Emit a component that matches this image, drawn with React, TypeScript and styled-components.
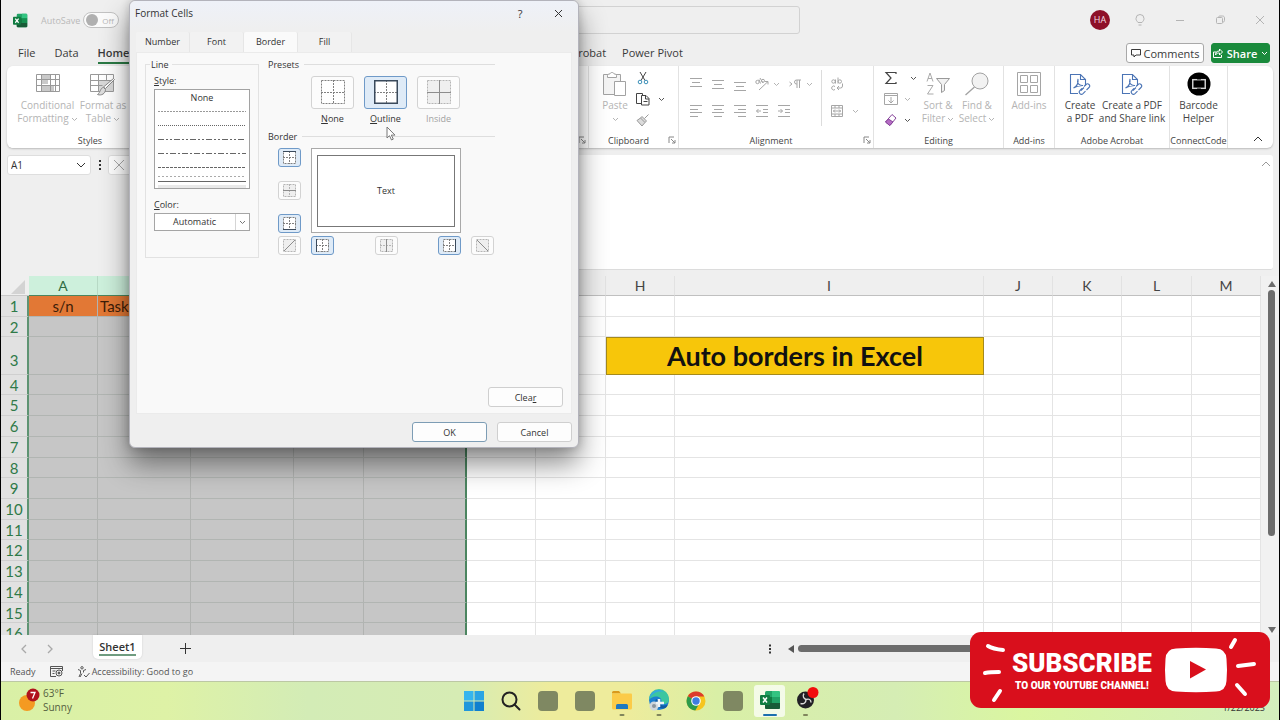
import React from "react";
import styled, { createGlobalStyle } from "styled-components";

const UI = `"Open Sans", "Noto Sans", sans-serif`;
const CELL = `Lato, "Open Sans", sans-serif`;

const GlobalStyle = createGlobalStyle`
  * { box-sizing: border-box; }
  body { margin: 0; background: #efefef; }
  button, input, select, textarea { font-family: inherit; margin: 0; }
  button { padding: 0; border: 0; background: none; color: inherit; cursor: default; }
  svg { display: block; flex: none; }
`;

/* ---------- window ---------- */
const Window = styled.div`
  position: relative;
  display: flex;
  flex-direction: column;
  height: 100vh;
  overflow: hidden;
  background: #efefef;
  border: 0 solid #000;
  border-width: 0 1px;
  font-family: ${UI};
  font-size: 10px;
  color: #333;
`;
const TitleBar = styled.header`
  display: flex;
  align-items: center;
  height: 40px;
  flex: none;
  padding: 0 9px 0 12px;
`;
const TitleLeft = styled.div`
  display: flex;
  align-items: center;
  gap: 3px;
  width: 466px;
  flex: none;
  color: #b9b9b9;
  font-size: 9px;
`;
const AutoSave = styled.span`
  margin-left: 10px;
`;
const Toggle = styled.button`
  display: flex;
  align-items: center;
  gap: 4px;
  width: 36px;
  height: 16px;
  padding-left: 2px;
  border: 1px solid #c2c2c2;
  border-radius: 8px;
  background: #fbfbfb;
  font-size: 8px;
`;
const Knob = styled.span`
  width: 12px;
  height: 12px;
  border-radius: 50%;
  background: #b0b0b0;
`;
const Search = styled.input`
  width: 321px;
  height: 28px;
  border: 1px solid #d2d2d2;
  border-radius: 3px;
  background: #efefef;
`;
const TitleRight = styled.div`
  display: flex;
  align-items: center;
  gap: 20px;
  margin-left: auto;
  color: #b4b4b4;
`;
const Avatar = styled.span`
  width: 20px;
  height: 20px;
  border-radius: 50%;
  background: #8e1028;
  color: #f3dfe2;
  font-size: 9px;
  line-height: 20px;
  text-align: center;
`;
const WindowButton = styled.button`
  display: grid;
  place-items: center;
  width: 20px;
  height: 20px;
`;

/* ---------- tabs ---------- */
const TabRow = styled.nav`
  display: flex;
  align-items: center;
  height: 26px;
  flex: none;
  padding: 0 9px 0 17px;
  font-size: 11px;
`;
const TabSet = styled.div<{ $wide?: boolean }>`
  display: flex;
  gap: ${(p) => (p.$wide ? "19px" : "16px")};
  width: ${(p) => (p.$wide ? "548px" : "auto")};
  flex: none;
`;
const Tab = styled.a<{ $active?: boolean }>`
  height: 22px;
  line-height: 22px;
  text-decoration: none;
  color: #3a3a3a;
  font-weight: ${(p) => (p.$active ? 600 : 400)};
  border-bottom: 2px solid ${(p) => (p.$active ? "#2b7a45" : "transparent")};
`;
const TabActions = styled.div`
  display: flex;
  gap: 7px;
  margin-left: auto;
`;
const ActionButton = styled.button<{ $green?: boolean }>`
  display: flex;
  align-items: center;
  justify-content: center;
  gap: ${(p) => (p.$green ? "4px" : "3px")};
  width: ${(p) => (p.$green ? "59px" : "78px")};
  height: 20px;
  border: 1px solid ${(p) => (p.$green ? "#1a8a3c" : "#a8a8a8")};
  border-radius: 3px;
  background: ${(p) => (p.$green ? "#1a8a3c" : "#fdfdfd")};
  color: ${(p) => (p.$green ? "#fff" : "#3a3a3a")};
  font-size: 11px;
  font-weight: ${(p) => (p.$green ? 600 : 400)};
`;

/* ---------- ribbon ---------- */
const Ribbon = styled.section`
  display: flex;
  height: 82px;
  flex: none;
  margin: 0 6px;
  border-radius: 6px;
  background: #fff;
  box-shadow: 0 1px 2px rgba(0, 0, 0, 0.22);
`;
const Group = styled.div<{ $w: number }>`
  display: flex;
  flex-direction: column;
  flex: none;
  width: ${(p) => p.$w}px;
  border-right: 1px solid #e2e2e2;
`;
const GroupBody = styled.div<{ $pad?: number }>`
  display: flex;
  flex: 1;
  padding: 0 ${(p) => p.$pad ?? 0}px;
`;
const GroupFoot = styled.div`
  display: flex;
  align-items: center;
  height: 16px;
  font-size: 9px;
  color: #444;
  white-space: nowrap;
`;
const GroupName = styled.span`
  flex: 1;
  text-align: center;
`;
const Launcher = styled.button`
  width: 10px;
  color: #888;
`;
const BigButton = styled.button<{ $w: number; $dim?: boolean }>`
  display: flex;
  flex-direction: column;
  align-items: center;
  width: ${(p) => p.$w}px;
  flex: none;
  padding-top: 6px;
  gap: 3px;
  font-size: 10px;
  line-height: 13px;
  white-space: nowrap;
  color: ${(p) => (p.$dim ? "#b4b4b4" : "#444")};
`;
const BigLabel = styled.span`
  display: flex;
  flex-direction: column;
  align-items: center;
`;
const LabelLine = styled.span`
  display: flex;
  align-items: center;
  gap: 2px;
  min-height: 13px;
`;
const ToolStack = styled.div<{ $gap?: number; $top?: number }>`
  display: flex;
  flex-direction: column;
  gap: ${(p) => p.$gap ?? 0}px;
  padding-top: ${(p) => p.$top ?? 1}px;
`;
const ToolLine = styled.div`
  display: flex;
  align-items: center;
  height: 21px;
`;
const Tool = styled.button<{ $dim?: boolean }>`
  display: grid;
  place-items: center;
  width: 22px;
  height: 20px;
  color: ${(p) => (p.$dim ? "#a6a6a6" : "#444")};
`;
const Arrow = styled.span<{ $dim?: boolean; $gap?: number }>`
  margin-left: ${(p) => p.$gap ?? 0}px;
  color: ${(p) => (p.$dim ? "#b4b4b4" : "#555")};
`;
const ToolDivider = styled.span`
  width: 1px;
  height: 56px;
  margin: 4px 4px 0 8px;
  background: #dcdcdc;
`;
const RibbonEnd = styled.div`
  display: flex;
  flex: 1;
  justify-content: flex-end;
  align-items: flex-end;
  padding: 0 10px 5px 0;
`;

/* ---------- formula bar ---------- */
const FormulaBar = styled.section`
  display: flex;
  align-items: flex-start;
  height: 115px;
  flex: none;
  margin: 7px 6px 6px;
`;
const NameBox = styled.div`
  display: flex;
  align-items: center;
  width: 84px;
  height: 20px;
  padding: 0 4px 0 3px;
  border: 1px solid #dedede;
  border-radius: 3px;
  background: #fff;
`;
const NameInput = styled.input`
  flex: 1;
  min-width: 0;
  border: 0;
  padding: 0;
  background: none;
  font-size: 10px;
  color: #333;
`;
const BarDots = styled.span`
  width: 17px;
  display: grid;
  place-items: center;
  height: 20px;
`;
const BarTools = styled.div`
  display: flex;
  align-items: center;
  width: 90px;
  height: 20px;
  padding-left: 4px;
  border: 1px solid #dedede;
  border-radius: 3px;
  background: #fff;
  color: #a9a9a9;
`;
const Formula = styled.div`
  display: flex;
  flex: 1;
  height: 115px;
  margin-left: 6px;
  border-radius: 3px;
  border-bottom: 1px solid #dcdcdc;
  background: #fff;
  color: #999;
`;
const FormulaText = styled.textarea`
  flex: 1;
  border: 0;
  resize: none;
  background: none;
`;
const Collapse = styled.button`
  width: 12px;
  height: 18px;
`;

/* ---------- grid ---------- */
const GridArea = styled.main`
  display: flex;
  flex: 1;
  min-height: 0;
  overflow: hidden;
`;
const Sheet = styled.div`
  flex: 1;
  min-width: 0;
  overflow: hidden;
  background: #fff;
`;
const Table = styled.table`
  table-layout: fixed;
  width: 1259px;
  border-collapse: separate;
  border-spacing: 0;
  font-family: ${CELL};
  font-size: 15px;
`;
const Row = styled.tr<{ $h: number }>`
  height: ${(p) => p.$h}px;
  vertical-align: baseline;
`;
const ColHead = styled.th<{ $sel?: boolean }>`
  padding: 1px 0 0;
  font-size: 14px;
  font-weight: 400;
  line-height: 18px;
  color: ${(p) => (p.$sel ? "#2f6b42" : "#444")};
  background: ${(p) => (p.$sel ? "#cdf0dc" : "#efefef")};
  border-right: 1px solid ${(p) => (p.$sel ? "#b7d9c5" : "#e2e2e2")};
  border-bottom: 1px solid ${(p) => (p.$sel ? "#4b8560" : "#c0c0c0")};
`;
const Corner = styled.th`
  padding: 2px 2px 0 10px;
  vertical-align: middle;
  background: #efefef;
  border-bottom: 1px solid #c9c9c9;
`;
const RowHead = styled.th`
  padding: 1px 0 0;
  vertical-align: baseline;
  font-weight: 400;
  line-height: 18px;
  color: #2f7a48;
  background: #e1e1e1;
  border-right: 2px solid #5f9473;
  border-bottom: 1px solid #cfcfcf;
`;
const Cell = styled.td<{ $sel?: boolean; $edge?: boolean; $fill?: "orange" | "yellow" }>`
  padding: 1px 2px 0;
  vertical-align: baseline;
  line-height: 18px;
  overflow: hidden;
  white-space: nowrap;
  text-align: left;
  color: #3d1d08;
  background: ${(p) => (p.$fill ? "#e27835" : p.$sel ? "#c6c6c6" : "#fff")};
  border-right: ${(p) => (p.$edge ? "2px solid #4b8560" : p.$sel ? "1px solid #b1b3b1" : "1px solid #e4e4e4")};
  border-bottom: 1px solid ${(p) => (p.$sel ? "#b1b5b2" : "#e4e4e4")};
`;
const CenterCell = styled(Cell)`
  text-align: center;
`;
const TitleCell = styled.td`
  padding: 0;
  vertical-align: baseline;
  text-align: center;
  font-size: 27px;
  font-weight: 700;
  line-height: 36px;
  color: #111;
  background: #f7c60a;
  border: 1px solid #a58a1c;
`;
const VScroll = styled.div`
  display: flex;
  flex-direction: column;
  align-items: center;
  justify-content: space-between;
  width: 18px;
  flex: none;
  padding: 5px 0 2px 3px;
  background: #f1f1f1;
`;
const VScrollTop = styled.div`
  display: flex;
  flex-direction: column;
  align-items: center;
  gap: 3px;
`;
const VThumb = styled.div`
  width: 7px;
  height: 246px;
  border-radius: 4px;
  background: #6c6c6c;
`;

/* ---------- sheet tabs and status ---------- */
const SheetBar = styled.div`
  display: flex;
  align-items: center;
  height: 27px;
  flex: none;
  padding-left: 17px;
  background: #efefef;
`;
const SheetNav = styled.button`
  display: grid;
  place-items: center;
  width: 12px;
  height: 20px;
  margin-right: 14px;
  color: #a9a9a9;
`;
const SheetTab = styled.button`
  align-self: flex-start;
  width: 49px;
  height: 24px;
  margin-left: 23px;
  border-radius: 0 0 5px 5px;
  background: #fff;
  font-size: 11px;
  font-weight: 600;
  line-height: 18px;
  box-shadow: 0 0 2px rgba(0, 0, 0, 0.16);
`;
const SheetName = styled.span`
  border-bottom: 2px solid #6f9c80;
`;
const AddSheet = styled.button`
  margin-left: 38px;
`;
const HScroll = styled.div`
  display: flex;
  align-items: center;
  gap: 4px;
  margin-left: auto;
  width: 511px;
`;
const HDots = styled.span`
  margin-right: 12px;
`;
const HThumb = styled.div`
  width: 300px;
  height: 7px;
  border-radius: 4px;
  background: #6c6c6c;
`;
const StatusBar = styled.footer`
  display: flex;
  align-items: center;
  height: 19px;
  flex: none;
  padding-left: 9px;
  background: #f4f4f4;
  font-size: 9px;
  color: #555;
`;
const StatusItem = styled.span<{ $gap: number }>`
  display: flex;
  align-items: center;
  gap: 2px;
  margin-right: ${(p) => p.$gap}px;
`;

/* ---------- taskbar ---------- */
const Taskbar = styled.div`
  display: grid;
  grid-template-columns: 1fr auto 1fr;
  align-items: center;
  height: 39px;
  flex: none;
  border-top: 1px solid #bcc8a4;
  background: linear-gradient(90deg, #d9f0a6 0%, #def2a6 13%, #d3ecb6 24%, #d6ecb4 36%, #eeec9c 43%, #eeec9c 49%, #d9efa6 56%, #d5edb4 70%, #daf6a0 80%, #d3efbd 100%);
`;
const Weather = styled.div`
  display: flex;
  align-items: center;
  gap: 3px;
  padding: 0 0 2px 17px;
  font-size: 10px;
  line-height: 14px;
  color: #55603f;
`;
const Temp = styled.div`
  display: flex;
  flex-direction: column;
`;
const Dock = styled.div`
  display: flex;
`;
const DockItem = styled.button<{ $open?: boolean }>`
  display: grid;
  place-items: center;
  width: 31px;
  height: 32px;
  margin: 0 3px;
  border-radius: 3px;
  background: ${(p) => (p.$open ? "rgba(255,255,255,.72)" : "transparent")};
`;
const Clock = styled.time`
  justify-self: end;
  align-self: end;
  padding-right: 14px;
  font-size: 9px;
  line-height: 24px;
  color: #333;
`;

/* ---------- dialog ---------- */
const Dialog = styled.section`
  position: absolute;
  top: 0;
  left: 128px;
  display: flex;
  flex-direction: column;
  width: 450px;
  height: 448px;
  padding: 0 6px 5px;
  border: 1px solid #b3b3bb;
  border-radius: 6px;
  background: #efefef;
  box-shadow: 0 16px 28px rgba(0, 0, 0, 0.45), 0 0 10px rgba(0, 0, 0, 0.2);
  font-size: 9px;
`;
const DialogTitle = styled.header`
  display: flex;
  align-items: center;
  height: 31px;
  padding: 0 1px 6px 5px;
  margin: 0 -6px;
  border-radius: 6px 6px 0 0;
  background: linear-gradient(#eef1f8, #efefef);
`;
const DialogHeading = styled.h1`
  flex: 1;
  margin: 0;
  font-size: 10px;
  font-weight: 400;
`;
const DialogButton = styled.button`
  display: grid;
  place-items: center;
  width: 38px;
  height: 24px;
  font-size: 11px;
`;
const DialogTabs = styled.div`
  display: flex;
  height: 20px;
`;
const DialogTab = styled.button<{ $active?: boolean }>`
  width: 54px;
  border-radius: 2px 2px 0 0;
  background: ${(p) => (p.$active ? "#fafafa" : "#f2f2f2")};
  border-right: 1px solid #e6e6e6;
  font-size: 9px;
`;
const Panel = styled.div`
  display: flex;
  flex-direction: column;
  height: 363px;
  padding: 5px 8px 6px;
  border: 1px solid #ebebeb;
  background: #f9f9f9;
`;
const PanelBody = styled.div`
  display: flex;
  gap: 9px;
  flex: 1;
`;
const LineSet = styled.fieldset`
  width: 114px;
  height: 200px;
  margin: 0;
  padding: 3px 8px;
  border: 1px solid #e2e2e2;
  line-height: 13px;
`;
const Legend = styled.legend`
  padding: 0 3px 0 1px;
  margin-left: -4px;
  line-height: 13px;
`;
const FieldLabel = styled.label`
  display: block;
  height: 15px;
  line-height: 14px;
`;
const StyleList = styled.div`
  height: 100px;
  margin-bottom: 9px;
  padding: 0 3px;
  border: 1px solid #a2a2a2;
  background: #fff;
`;
const StyleNone = styled.div`
  height: 16px;
  line-height: 15px;
  text-align: center;
`;
const SelectWrap = styled.div`
  position: relative;
`;
const ColorSelect = styled.select`
  width: 100%;
  height: 18px;
  padding: 0 15px 0 0;
  border: 1px solid #a5a5a5;
  border-radius: 0;
  background: #fff;
  appearance: none;
  font-size: 9px;
  color: #333;
  text-align-last: center;
`;
const SelectArrow = styled.span`
  position: absolute;
  top: 1px;
  right: 1px;
  display: grid;
  place-items: center;
  width: 14px;
  height: 16px;
  border-left: 1px solid #d5d5d5;
  color: #777;
  pointer-events: none;
`;
const RightSide = styled.div`
  width: 227px;
`;
const SectionHead = styled.h2`
  display: flex;
  align-items: center;
  gap: 5px;
  margin: 0;
  height: 13px;
  font-size: 9px;
  font-weight: 400;

  &::after {
    content: "";
    flex: 1;
    height: 1px;
    background: #dedede;
  }
`;
const Presets = styled.div`
  display: flex;
  gap: 10px;
  padding: 5px 0 0 43px;
  height: 59px;
`;
const Preset = styled.div<{ $dim?: boolean }>`
  display: flex;
  flex-direction: column;
  align-items: center;
  gap: 3px;
  color: ${(p) => (p.$dim ? "#a2a2a2" : "#333")};
  line-height: 13px;
`;
const ToggleButton = styled.button<{ $on?: boolean; $big?: boolean }>`
  display: grid;
  place-items: center;
  width: ${(p) => (p.$big ? 43 : 23)}px;
  height: ${(p) => (p.$big ? 33 : 19)}px;
  border: 1px solid ${(p) => (p.$on ? "#6f9ac8" : "#d3d3d3")};
  border-radius: 3px;
  background: ${(p) => (p.$on ? "#dfebf7" : "#fcfcfc")};
`;
const BorderGrid = styled.div`
  display: grid;
  grid-template-columns: 23px 150px 23px;
  gap: 3px 10px;
  padding: 5px 0 0 10px;
`;
const SideButtons = styled.div`
  display: flex;
  flex-direction: column;
  justify-content: space-between;
  height: 85px;
`;
const Preview = styled.div`
  padding: 6px 5px 5px;
  border: 1px solid #a9a9a9;
  background: #fff;
`;
const PreviewCell = styled.div`
  display: grid;
  place-items: center;
  height: 72px;
  border: 1px solid #777;
`;
const BottomButtons = styled.div`
  display: flex;
  justify-content: space-between;
`;
const Actions = styled.div<{ $foot?: boolean }>`
  display: flex;
  justify-content: flex-end;
  gap: 10px;
  padding-top: ${(p) => (p.$foot ? "8px" : "0")};
`;
const PushButton = styled.button<{ $primary?: boolean }>`
  width: 75px;
  height: 20px;
  flex: none;
  border: 1px solid ${(p) => (p.$primary ? "#7d9db5" : "#cfcfcf")};
  border-radius: 3px;
  background: #fdfdfd;
  font-size: 9px;
`;
const Pointer = styled.svg`
  position: absolute;
  top: 126px;
  left: 385px;
`;

/* ---------- overlay banner ---------- */
const Banner = styled.a`
  position: absolute;
  right: 9px;
  bottom: 12px;
  display: flex;
  align-items: center;
  gap: 6px;
  width: 300px;
  height: 76px;
  padding: 0 12px;
  border-radius: 11px;
  background: #d90f1c;
  color: #fff;
  text-decoration: none;
  font-family: Roboto, sans-serif;
  font-weight: 900;
  white-space: nowrap;
`;
const BannerText = styled.span`
  display: flex;
  flex-direction: column;
  align-items: center;
`;
const BannerBig = styled.span`
  font-size: 26px;
  line-height: 32px;
`;
const BannerSmall = styled.span`
  font-size: 10px;
  line-height: 14px;
`;
const BannerPlay = styled.svg`
  margin-left: auto;
`;

/* ---------- icons ---------- */
type IconProps = { w: number; h: number; children: React.ReactNode };
const Icon = ({ w, h, children }: IconProps) => (
  <svg width={w} height={h} viewBox={`0 0 ${w} ${h}`} fill="none" stroke="currentColor" strokeWidth="1">
    {children}
  </svg>
);
const Chevron = ({ up, wide }: { up?: boolean; wide?: boolean }) => (
  <Icon w={wide ? 10 : 7} h={8}>
    <path d={wide ? (up ? "M1 6l4-4 4 4" : "M1 2l4 4 4-4") : "M1 3l2.500 2.500L6 3"} />
  </Icon>
);
const ExcelLogo = ({ size }: { size: number }) => (
  <svg width={size} height={size} viewBox="0 0 20 20">
    <rect x="5" y="1" width="14" height="18" rx="1.500" fill="#21a366" />
    <path d="M12 1h5.500A1.500 1.500 0 0 1 19 2.500V7h-7z" fill="#33c481" />
    <path d="M5 7h7v6H5z" fill="#107c41" />
    <path d="M5 13h14v4.500a1.500 1.500 0 0 1-1.500 1.500h-11A1.500 1.500 0 0 1 5 17.500z" fill="#185c37" />
    <path d="M12 7h7v6h-7z" fill="#159050" />
    <rect x="0" y="5" width="10.500" height="10.500" rx="1" fill="#107c41" />
    <path d="M3 7.500l4.500 5.500M7.500 7.500L3 13" stroke="#fff" strokeWidth="1.600" />
  </svg>
);
const LaunchIcon = () => (
  <Icon w={8} h={8}>
    <path d="M1 7V1h5M3 3l4 4M7 4v3H4" />
  </Icon>
);
const CondIcon = () => (
  <Icon w={24} h={24}>
    <rect x="5" y="3" width="10" height="4" fill="#c9c9c9" stroke="none" />
    <rect x="5" y="8" width="7" height="4" fill="#c9c9c9" stroke="none" />
    <rect x="5" y="14" width="13" height="5" fill="#c9c9c9" stroke="none" />
    <path d="M.5 2.500h23v17H.5zM.5 7.500h23M.5 13.500h23M5.500 2.500v17M14.500 2.500v17M19.500 2.500v17" stroke="#999" />
  </Icon>
);
const FormatTableIcon = () => (
  <Icon w={26} h={24}>
    <rect x="8" y="8" width="15" height="11" fill="#d8d8d8" stroke="none" />
    <path d="M.5 2.500h23v17H.5zM.5 8.500h23M.5 13.500h12M8.500 2.500v17M16.500 2.500v6" stroke="#999" />
    <path d="M24.500 7.500l-9 9-2-1.500 10-8.500z" fill="#fff" stroke="#888" />
    <path d="M13.500 15.500c-3 0-3 5-6 7 4 1.500 8-1 8-5z" fill="#ddd" stroke="#888" />
  </Icon>
);
const PasteIcon = () => (
  <Icon w={24} h={24}>
    <path d="M.5 2.500h17v20H.5z" fill="#f4f4f4" stroke="#a2a2a2" />
    <path d="M4.500 3.500c0-1.500 2-1.500 2.500-1.500 0-2 4-2 4 0 .5 0 2.500 0 2.500 1.500v2h-9z" fill="#fff" stroke="#a2a2a2" />
    <path d="M11.500 9.500h11v14h-11z" fill="#fff" stroke="#a2a2a2" />
  </Icon>
);
const CutIcon = () => (
  <Icon w={12} h={14}>
    <path d="M3 1l5 8.500M9 1L4 9.500" stroke="#444" />
    <circle cx="3" cy="11" r="1.800" stroke="#3a8fb8" />
    <circle cx="9" cy="11" r="1.800" stroke="#3a8fb8" />
  </Icon>
);
const CopyIcon = () => (
  <Icon w={14} h={14}>
    <path d="M5 11.500H.5V1.500h6v2" />
    <path d="M5.500 3.500h4.500l3 3v6.500H5.500zM9.500 3.500V7H13M7.500 9.500h4" fill="#fff" />
  </Icon>
);
const PainterIcon = () => (
  <Icon w={14} h={14}>
    <path d="M12.500 1.500l-4 4M6 3.500L10.500 8 9 9.500 4.500 5zM4.500 5L1 7.500l5 5.500L9 9.500" fill="#dcdcdc" stroke="#999" />
  </Icon>
);
const Lines = ({ kind }: { kind: string }) => {
  const d: Record<string, string> = {
    top: "M1 1.500h12M3 5.500h8M1 9.500h12",
    middle: "M1 3.500h12M3 7.500h8M1 11.500h12",
    bottom: "M1 5.500h12M3 9.500h8M1 13.500h12",
    left: "M1 1.500h12M1 5.500h8M1 8.500h12M1 12.500h8",
    center: "M1 1.500h12M3 5.500h8M1 8.500h12M3 12.500h8",
    right: "M1 1.500h12M5 5.500h8M1 8.500h12M5 12.500h8",
    outdent: "M1 1.500h12M8 5.500h5M8 8.500h5M1 12.500h12M6 7H1.500M3.500 5l-2 2 2 2",
    indent: "M1 1.500h12M8 5.500h5M8 8.500h5M1 12.500h12M1 7h4.500M3.500 5l2 2-2 2",
  };
  return (
    <Icon w={14} h={14}>
      <path d={d[kind]} />
    </Icon>
  );
};
const OrientIcon = () => (
  <Icon w={16} h={14}>
    <circle cx="3.500" cy="5" r="1.700" />
    <path d="M5 2.500l1.500 4M6 1l3 5" />
    <circle cx="9" cy="3.800" r="1.500" />
    <path d="M5 13l9-8.500M11 4.500h3v3" />
  </Icon>
);
const PilcrowIcon = () => (
  <Icon w={14} h={12}>
    <path d="M1.500 4l2.500 2-2.500 2" />
    <path d="M9 10V2M11.500 10V2M13 2H8.500a2 2 0 0 0 0 4H9" />
  </Icon>
);
const WrapIcon = () => (
  <Icon w={14} h={14}>
    <circle cx="3.500" cy="4.500" r="1.700" />
    <path d="M5.500 2.500v4M8 .5v6M5 9.500a2 2 0 1 0 0 3M12.500 6.500v2.500a2 2 0 0 1-2 2H7.500M9 9l-2 2 2 2" />
    <circle cx="9.800" cy="4.500" r="1.700" />
  </Icon>
);
const MergeIcon = () => (
  <Icon w={14} h={14}>
    <path d="M1.500 1.500h11v11h-11zM1.500 4h11M1.500 10h11M5 1.500V4M9 1.500V4M5 10v2.500M9 10v2.500M3 7h8M5 5.500L3.500 7 5 8.500M9 5.500L10.500 7 9 8.500" />
  </Icon>
);
const SigmaIcon = () => (
  <Icon w={14} h={14}>
    <path d="M12 3V1.500H2L7 7l-5 5.500h10V11" strokeWidth="1.200" />
  </Icon>
);
const FillIcon = () => (
  <Icon w={14} h={12}>
    <path d="M.5.500h13v11H.5zM.5 2.500h13M7 4v5.500M4.500 7.500L7 10l2.500-2.500" />
  </Icon>
);
const EraserIcon = () => (
  <Icon w={14} h={14}>
    <path d="M8 1.500l4 3.500-6 7.500-4.500-3.500z" fill="#fff" stroke="#87449a" />
    <path d="M4.500 6L9 9l-3.300 3.500L1.500 9z" fill="#b56cc4" stroke="#87449a" />
  </Icon>
);
const SortIcon = () => (
  <Icon w={24} h={24}>
    <path d="M1 9.500L4 1l3 8.500M2 6.500h4M1.500 13.500h5.500L1.500 22h6" stroke="#aaa" />
    <path d="M10.500 6.500h13l-5 6v6l-3 2v-8z" fill="#f2f2f2" stroke="#999" />
  </Icon>
);
const FindIcon = () => (
  <Icon w={26} h={24}>
    <circle cx="16" cy="9" r="8" fill="#f2f2f2" stroke="#a2a2a2" />
    <path d="M10.500 15L1.500 23" stroke="#a2a2a2" strokeWidth="1.400" />
  </Icon>
);
const AddinsIcon = () => (
  <Icon w={24} h={24}>
    <path d="M.5.500h23v23H.5zM3.500 3.500h7v7h-7zM13.500 3.500h7v7h-7zM3.500 13.500h7v7h-7zM13.500 13.500h7v7h-7z" stroke="#a5a5a5" />
  </Icon>
);
const PdfIcon = () => (
  <Icon w={22} h={24}>
    <g stroke="#4b74b5" strokeWidth="1.100">
      <path d="M9 21.500H1.500v-19h10l5 5v6M11.500 2.500v5h5" />
      <path d="M4.500 16c4-2 5-5 4.500-9-1.500 4 1 7 5 6.500-3 .3-6 .5-9.500 2.500z" />
      <path d="M12 18.500l3-3M15 14.500l2-2a2.100 2.100 0 0 1 3 3l-2.500 2.500M13 16.500l-2 2a2.100 2.100 0 0 0 3 3.200l2.500-2.500" />
    </g>
  </Icon>
);
const BarcodeIcon = () => (
  <svg width="24" height="24" viewBox="0 0 25 25">
    <circle cx="12.500" cy="12.500" r="12" fill="#000" />
    <rect x="6" y="8" width="13" height="9" fill="none" stroke="#d5d5d5" strokeWidth="1.500" />
    <path d="M10.500 7h4M10.500 18h4" stroke="#000" strokeWidth="1.500" />
  </svg>
);

/* border pictograms: dashed base with solid edges on top */
const edgePath = (kind: string, s: number) => {
  const e = s - 0.5;
  const m = Math.floor(s / 2) + 0.5;
  const paths: Record<string, string> = {
    none: "",
    outline: `M.5 .5H${e}V${e}H.5z`,
    inside: `M${m} 0V${s}M0 ${m}H${s}`,
    top: `M0 .5H${s}`,
    hmid: `M0 ${m}H${s}`,
    bottom: `M0 ${e}H${s}`,
    left: `M.5 0V${s}`,
    vmid: `M${m} 0V${s}`,
    right: `M${e} 0V${s}`,
    up: `M1 ${s - 1}L${s - 1} 1`,
    down: `M1 1L${s - 1} ${s - 1}`,
  };
  return paths[kind];
};
const BorderIcon = ({ kind, size = 13, dim }: { kind: string; size?: number; dim?: boolean }) => (
  <svg width={size} height={size} viewBox={`0 0 ${size} ${size}`} fill={dim ? "#efefef" : "#fff"}>
    <path
      d={edgePath("outline", size) + (kind === "up" || kind === "down" ? "" : edgePath("inside", size))}
      stroke={dim ? "#b5b5b5" : "#808080"}
      strokeDasharray="2 1"
    />
    <path d={edgePath(kind, size)} fill="none" stroke={dim ? "#8d8d8d" : "#3a4a5c"} strokeWidth={kind === "outline" ? 2 : 1} />
  </svg>
);

const LineSamples = () => (
  <svg width="100%" height="82" stroke="#666" strokeWidth="1">
    <line x1="0" x2="100%" y1="5.500" y2="5.500" strokeDasharray="2 1" stroke="#999" />
    <line x1="0" x2="100%" y1="19.500" y2="19.500" strokeDasharray="1 1" />
    <line x1="0" x2="100%" y1="33.500" y2="33.500" strokeDasharray="6 2 2 2 2 2" />
    <line x1="0" x2="100%" y1="47.500" y2="47.500" strokeDasharray="6 2 2 2" />
    <line x1="0" x2="100%" y1="61.500" y2="61.500" strokeDasharray="3 1" />
    <line x1="0" x2="100%" y1="70.500" y2="70.500" strokeDasharray="2 2" stroke="#aaa" />
    <line x1="0" x2="100%" y1="75.500" y2="75.500" />
    <rect x="0" y="79" width="100%" height="3" fill="#e9e9e9" stroke="none" />
  </svg>
);

/* ---------- taskbar icons ---------- */
const StartIcon = () => (
  <svg width="20" height="20" viewBox="0 0 20 20">
    <path d="M0 0h9.500v9.500H0z" fill="#35b5ee" />
    <path d="M10.500 0H20v9.500h-9.500z" fill="#2aa4e4" />
    <path d="M0 10.500h9.500V20H0z" fill="#1f97dc" />
    <path d="M10.500 10.500H20V20h-9.500z" fill="#0f7fcf" />
  </svg>
);
const SearchIcon = () => (
  <svg width="20" height="20" viewBox="0 0 20 20" fill="none" stroke="#222" strokeWidth="2">
    <circle cx="8.500" cy="8.500" r="7" />
    <path d="M13.500 13.500l5 5" strokeLinecap="round" />
  </svg>
);
const BlankIcon = () => (
  <svg width="20" height="20" viewBox="0 0 20 20">
    <rect width="20" height="20" rx="4" fill="#7f8862" />
  </svg>
);
const FolderIcon = () => (
  <svg width="22" height="30" viewBox="0 0 22 30">
    <path d="M1 6.500A1.500 1.500 0 0 1 2.500 5H8l2 2.500H1z" fill="#d99a1d" />
    <path d="M1 7.500h19a1 1 0 0 1 1 1V22a1.500 1.500 0 0 1-1.500 1.500h-17A1.500 1.500 0 0 1 1 22z" fill="#fbcb48" />
    <path d="M5 23v-3.500A1.500 1.500 0 0 1 6.500 18h9a1.500 1.500 0 0 1 1.500 1.500V23z" fill="#1f78c0" />
    <rect x="8.500" y="28" width="5" height="2" rx="1" fill="#80855c" />
  </svg>
);
const EdgeIcon = () => (
  <svg width="22" height="30" viewBox="0 -1 22 30">
    <circle cx="11" cy="13" r="10" fill="#1c7fd0" />
    <path d="M1 12A10 10 0 0 1 21 12c0 3-2 5-5 5-2 0-3-1-2.500-2.500C14 10 8 8 4 10.500 2 11.500 1 13 1 12z" fill="#3cc6a0" />
    <path d="M1.500 10.500C3 3.500 11 1 16 5c-6-1.500-12 1-14.500 7z" fill="#35a9df" />
    <path d="M8 12c-2 4 1 10 8.500 9.500 2-1 3-2.500 3.500-4-5 2.500-9 0-9-4z" fill="#105ba5" />
    <circle cx="6" cy="19" r="4.500" fill="#cfd6dc" />
    <path d="M11 12v8M8 16h8" stroke="#eef4f6" strokeWidth="2.500" />
    <circle cx="6" cy="19" r="2" fill="#8b949c" />
    <rect x="8.500" y="27" width="5" height="2" rx="1" fill="#80855c" />
  </svg>
);
const ChromeIcon = () => (
  <svg width="20" height="20" viewBox="0 0 20 20">
    <circle cx="10" cy="10" r="9.500" fill="#f6c51e" />
    <path d="M10 10L1.800 5.200A9.500 9.500 0 0 1 18.300 5.500H10z" fill="#dc3b2c" />
    <path d="M10 10L1.800 5.200a9.500 9.500 0 0 0 7.500 14.300l4-7z" fill="#2c9b4b" />
    <circle cx="10" cy="10" r="4.800" fill="#fff" />
    <circle cx="10" cy="10" r="3.700" fill="#3e7de0" />
  </svg>
);
const ExcelTask = () => (
  <svg width="22" height="30" viewBox="0 0 22 30">
    <rect x="6" y="5" width="15" height="18" rx="1.500" fill="#21a366" />
    <path d="M13 5h6.500A1.500 1.500 0 0 1 21 6.500V11h-8z" fill="#33c481" />
    <path d="M6 11h7v6H6z" fill="#107c41" />
    <path d="M6 17h15v4.500a1.500 1.500 0 0 1-1.500 1.500h-12A1.500 1.500 0 0 1 6 21.500z" fill="#185c37" />
    <rect x="1" y="9" width="10" height="10" rx="1" fill="#107c41" />
    <path d="M4 11.500l4 5M8 11.500l-4 5" stroke="#fff" strokeWidth="1.500" />
    <rect x="4" y="28" width="14" height="2" rx="1" fill="#1d6fae" />
  </svg>
);
const ObsIcon = () => (
  <svg width="24" height="30" viewBox="0 -1 24 30">
    <circle cx="10.500" cy="13" r="8.500" fill="#222126" />
    <path d="M9 6.500c-2 3 0 5 2 6M11 12.500c3-1 5 0 5 3M11 12.500c0 3-2 5-5.500 4" stroke="#ddd" strokeWidth="1.400" fill="none" />
    <circle cx="18" cy="5.500" r="5.500" fill="#f20d0d" />
    <rect x="8" y="27" width="5" height="2" rx="1" fill="#80855c" />
  </svg>
);
const SunIcon = () => (
  <svg width="22" height="24" viewBox="0 0 22 24">
    <circle cx="9" cy="15" r="8" fill="#f49a22" />
    <circle cx="15" cy="7" r="6.500" fill="#b0121c" />
    <path d="M12.500 4.500h4.500l-2.500 6" stroke="#fff" strokeWidth="1.300" fill="none" />
  </svg>
);

/* ---------- data ---------- */
const columns = [
  { name: "A", w: 69 },
  { name: "B", w: 93 },
  { name: "C", w: 103 },
  { name: "D", w: 70 },
  { name: "E", w: 103 },
  { name: "F", w: 69 },
  { name: "G", w: 70 },
  { name: "H", w: 69 },
  { name: "I", w: 309 },
  { name: "J", w: 69 },
  { name: "K", w: 69 },
  { name: "L", w: 70 },
  { name: "M", w: 69 },
];
const selectedCount = 5;
const rowHeights = [21, 20, 38, 20, 21, 21, 21, 20, 21, 21, 20, 21, 21, 21, 20, 21];

const SheetRow = ({ n, h }: { n: number; h: number }) => (
  <Row $h={h}>
    <RowHead scope="row">{n}</RowHead>
    {columns.map((c, i) => {
      if (n === 3 && c.name === "H") {
        return (
          <TitleCell key={c.name} colSpan={2}>
            Auto borders in Excel
          </TitleCell>
        );
      }
      if (n === 3 && c.name === "I") return null;
      const common = { $sel: i < selectedCount, $edge: i === selectedCount - 1 };
      if (n === 1 && c.name === "A") {
        return (
          <CenterCell key={c.name} {...common} $fill="orange">
            s/n
          </CenterCell>
        );
      }
      return (
        <Cell key={c.name} {...common} $fill={n === 1 && i < selectedCount ? "orange" : undefined}>
          {n === 1 && c.name === "B" ? "Task" : null}
        </Cell>
      );
    })}
  </Row>
);

const FormatCells = () => (
  <Dialog role="dialog" aria-labelledby="dialog-title">
    <DialogTitle>
      <DialogHeading id="dialog-title">Format Cells</DialogHeading>
      <DialogButton>?</DialogButton>
      <DialogButton aria-label="Close">
        <Icon w={9} h={9}>
          <path d="M1 1l7 7M8 1L1 8" />
        </Icon>
      </DialogButton>
    </DialogTitle>
    <DialogTabs role="tablist">
      {["Number", "Font", "Border", "Fill"].map((t) => (
        <DialogTab key={t} role="tab" $active={t === "Border"}>
          {t}
        </DialogTab>
      ))}
    </DialogTabs>
    <Panel>
      <PanelBody>
        <LineSet>
          <Legend>Line</Legend>
          <FieldLabel as="div">
            <u>S</u>tyle:
          </FieldLabel>
          <StyleList role="listbox" aria-label="Style">
            <StyleNone>None</StyleNone>
            <LineSamples />
          </StyleList>
          <FieldLabel htmlFor="line-color">
            <u>C</u>olor:
          </FieldLabel>
          <SelectWrap>
            <ColorSelect id="line-color">
              <option>Automatic</option>
            </ColorSelect>
            <SelectArrow>
              <Chevron />
            </SelectArrow>
          </SelectWrap>
        </LineSet>
        <RightSide>
          <SectionHead>Presets</SectionHead>
          <Presets>
            <Preset>
              <ToggleButton $big aria-label="None">
                <BorderIcon kind="none" size={24} />
              </ToggleButton>
              <span>
                <u>N</u>one
              </span>
            </Preset>
            <Preset>
              <ToggleButton $big $on aria-label="Outline">
                <BorderIcon kind="outline" size={24} />
              </ToggleButton>
              <span>
                <u>O</u>utline
              </span>
            </Preset>
            <Preset $dim>
              <ToggleButton $big aria-label="Inside">
                <BorderIcon kind="inside" size={24} dim />
              </ToggleButton>
              <span>Inside</span>
            </Preset>
          </Presets>
          <SectionHead>Border</SectionHead>
          <BorderGrid>
            <SideButtons>
              <ToggleButton $on aria-label="Top border">
                <BorderIcon kind="top" />
              </ToggleButton>
              <ToggleButton aria-label="Horizontal inside border">
                <BorderIcon kind="hmid" dim />
              </ToggleButton>
              <ToggleButton $on aria-label="Bottom border">
                <BorderIcon kind="bottom" />
              </ToggleButton>
            </SideButtons>
            <Preview>
              <PreviewCell>Text</PreviewCell>
            </Preview>
            <span />
            <ToggleButton aria-label="Diagonal up">
              <BorderIcon kind="up" dim />
            </ToggleButton>
            <BottomButtons>
              <ToggleButton $on aria-label="Left border">
                <BorderIcon kind="left" />
              </ToggleButton>
              <ToggleButton aria-label="Vertical inside border">
                <BorderIcon kind="vmid" dim />
              </ToggleButton>
              <ToggleButton $on aria-label="Right border">
                <BorderIcon kind="right" />
              </ToggleButton>
            </BottomButtons>
            <ToggleButton aria-label="Diagonal down">
              <BorderIcon kind="down" dim />
            </ToggleButton>
          </BorderGrid>
        </RightSide>
      </PanelBody>
      <Actions>
        <PushButton>
          Clea<u>r</u>
        </PushButton>
      </Actions>
    </Panel>
    <Actions $foot>
      <PushButton $primary>OK</PushButton>
      <PushButton>Cancel</PushButton>
    </Actions>
  </Dialog>
);

export default function App() {
  return (
    <>
      <GlobalStyle />
      <Window>
        <TitleBar>
          <TitleLeft>
            <ExcelLogo size={15} />
            <AutoSave>AutoSave</AutoSave>
            <Toggle role="switch" aria-checked={false} aria-label="AutoSave">
              <Knob />
              Off
            </Toggle>
          </TitleLeft>
          <Search aria-label="Search" />
          <TitleRight>
            <Avatar>HA</Avatar>
            <WindowButton aria-label="Tips">
              <Icon w={10} h={12}>
                <path d="M3 8.500C2 7 1 6.500 1 4.500a4 4 0 0 1 8 0c0 2-1 2.500-2 4zM3.500 11h3" />
              </Icon>
            </WindowButton>
            <WindowButton aria-label="Minimize">
              <Icon w={10} h={10}>
                <path d="M1 5.500h8" />
              </Icon>
            </WindowButton>
            <WindowButton aria-label="Restore">
              <Icon w={10} h={10}>
                <rect x="1.500" y="2.500" width="6" height="6" rx="1" />
                <path d="M3.500 2.500c0-1 .5-1.500 1.500-1.500h2.500C9 1 9.500 2 9.500 3v2.500c0 1-.5 1.500-1.500 1.500" />
              </Icon>
            </WindowButton>
            <WindowButton aria-label="Close">
              <Icon w={10} h={10}>
                <path d="M1 1l8 8M9 1L1 9" />
              </Icon>
            </WindowButton>
          </TitleRight>
        </TitleBar>

        <TabRow>
          <TabSet $wide>
            <Tab href="#file">File</Tab>
            <Tab href="#data">Data</Tab>
            <Tab href="#home" $active>
              Home
            </Tab>
          </TabSet>
          <TabSet>
            <Tab href="#acrobat">Acrobat</Tab>
            <Tab href="#pivot">Power Pivot</Tab>
          </TabSet>
          <TabActions>
            <ActionButton>
              <Icon w={10} h={10}>
                <path d="M.5 1.500h9v5.500H5L3 9V7H.5z" />
              </Icon>
              Comments
            </ActionButton>
            <ActionButton $green>
              <Icon w={10} h={10}>
                <path d="M3.500 4H.5v5.500h8V7M2.500 7c0-3 1.500-4 4-4V1l3 3-3 3V5C5 5 3.500 5 2.500 7z" />
              </Icon>
              Share
              <Chevron />
            </ActionButton>
          </TabActions>
        </TabRow>

        <Ribbon>
          <Group $w={167}>
            <GroupBody $pad={12}>
              <BigButton $w={57} $dim>
                <CondIcon />
                <BigLabel>
                  <LabelLine>Conditional</LabelLine>
                  <LabelLine>
                    Formatting <Chevron />
                  </LabelLine>
                </BigLabel>
              </BigButton>
              <BigButton $w={54} $dim>
                <FormatTableIcon />
                <BigLabel>
                  <LabelLine>Format as</LabelLine>
                  <LabelLine>
                    Table <Chevron />
                  </LabelLine>
                </BigLabel>
              </BigButton>
            </GroupBody>
            <GroupFoot>
              <GroupName>Styles</GroupName>
            </GroupFoot>
          </Group>
          <Group $w={415}>
            <GroupBody />
            <GroupFoot>
              <GroupName />
              <Launcher aria-label="More number options">
                <LaunchIcon />
              </Launcher>
            </GroupFoot>
          </Group>
          <Group $w={90}>
            <GroupBody $pad={9}>
              <BigButton $w={34} $dim>
                <PasteIcon />
                <BigLabel>
                  <LabelLine>Paste</LabelLine>
                  <LabelLine>
                    <Chevron />
                  </LabelLine>
                </BigLabel>
              </BigButton>
              <ToolStack>
                <ToolLine>
                  <Tool aria-label="Cut">
                    <CutIcon />
                  </Tool>
                </ToolLine>
                <ToolLine>
                  <Tool aria-label="Copy">
                    <CopyIcon />
                  </Tool>
                  <Arrow $gap={4}>
                    <Chevron />
                  </Arrow>
                </ToolLine>
                <ToolLine>
                  <Tool aria-label="Format painter">
                    <PainterIcon />
                  </Tool>
                </ToolLine>
              </ToolStack>
            </GroupBody>
            <GroupFoot>
              <GroupName>Clipboard</GroupName>
              <Launcher aria-label="More clipboard options">
                <LaunchIcon />
              </Launcher>
            </GroupFoot>
          </Group>
          <Group $w={195}>
            <GroupBody $pad={6}>
              <ToolStack $gap={6} $top={7}>
                <ToolLine>
                  {["top", "middle", "bottom"].map((k) => (
                    <Tool key={k} $dim aria-label={`Align ${k}`}>
                      <Lines kind={k} />
                    </Tool>
                  ))}
                  <Tool $dim aria-label="Orientation">
                    <OrientIcon />
                  </Tool>
                  <Arrow $dim>
                    <Chevron />
                  </Arrow>
                  <Arrow $gap={4}>
                    <Tool $dim aria-label="Text direction">
                      <PilcrowIcon />
                    </Tool>
                  </Arrow>
                  <Arrow $dim>
                    <Chevron />
                  </Arrow>
                </ToolLine>
                <ToolLine>
                  {["left", "center", "right", "outdent", "indent"].map((k) => (
                    <Tool key={k} $dim aria-label={k}>
                      <Lines kind={k} />
                    </Tool>
                  ))}
                </ToolLine>
              </ToolStack>
              <ToolDivider />
              <ToolStack $gap={6} $top={7}>
                <ToolLine>
                  <Tool $dim aria-label="Wrap text">
                    <WrapIcon />
                  </Tool>
                </ToolLine>
                <ToolLine>
                  <Tool $dim aria-label="Merge">
                    <MergeIcon />
                  </Tool>
                  <Arrow $dim $gap={4}>
                    <Chevron />
                  </Arrow>
                </ToolLine>
              </ToolStack>
            </GroupBody>
            <GroupFoot>
              <GroupName>Alignment</GroupName>
              <Launcher aria-label="More alignment options">
                <LaunchIcon />
              </Launcher>
            </GroupFoot>
          </Group>
          <Group $w={130}>
            <GroupBody $pad={6}>
              <ToolStack>
                <ToolLine>
                  <Tool aria-label="AutoSum">
                    <SigmaIcon />
                  </Tool>
                  <Arrow $gap={8}>
                    <Chevron />
                  </Arrow>
                </ToolLine>
                <ToolLine>
                  <Tool $dim aria-label="Fill">
                    <FillIcon />
                  </Tool>
                  <Arrow $dim $gap={2}>
                    <Chevron />
                  </Arrow>
                </ToolLine>
                <ToolLine>
                  <Tool aria-label="Clear">
                    <EraserIcon />
                  </Tool>
                  <Arrow $gap={2}>
                    <Chevron />
                  </Arrow>
                </ToolLine>
              </ToolStack>
              <BigButton $w={42} $dim>
                <SortIcon />
                <BigLabel>
                  <LabelLine>Sort &amp;</LabelLine>
                  <LabelLine>
                    Filter <Chevron />
                  </LabelLine>
                </BigLabel>
              </BigButton>
              <BigButton $w={36} $dim>
                <FindIcon />
                <BigLabel>
                  <LabelLine>Find &amp;</LabelLine>
                  <LabelLine>
                    Select <Chevron />
                  </LabelLine>
                </BigLabel>
              </BigButton>
            </GroupBody>
            <GroupFoot>
              <GroupName>Editing</GroupName>
            </GroupFoot>
          </Group>
          <Group $w={51}>
            <GroupBody>
              <BigButton $w={50} $dim>
                <AddinsIcon />
                <BigLabel>
                  <LabelLine>Add-ins</LabelLine>
                </BigLabel>
              </BigButton>
            </GroupBody>
            <GroupFoot>
              <GroupName>Add-ins</GroupName>
            </GroupFoot>
          </Group>
          <Group $w={115}>
            <GroupBody $pad={5}>
              <BigButton $w={40}>
                <PdfIcon />
                <BigLabel>
                  <LabelLine>Create</LabelLine>
                  <LabelLine>a PDF</LabelLine>
                </BigLabel>
              </BigButton>
              <BigButton $w={64}>
                <PdfIcon />
                <BigLabel>
                  <LabelLine>Create a PDF</LabelLine>
                  <LabelLine>and Share link</LabelLine>
                </BigLabel>
              </BigButton>
            </GroupBody>
            <GroupFoot>
              <GroupName>Adobe Acrobat</GroupName>
            </GroupFoot>
          </Group>
          <Group $w={58}>
            <GroupBody>
              <BigButton $w={57}>
                <BarcodeIcon />
                <BigLabel>
                  <LabelLine>Barcode</LabelLine>
                  <LabelLine>Helper</LabelLine>
                </BigLabel>
              </BigButton>
            </GroupBody>
            <GroupFoot>
              <GroupName>ConnectCode</GroupName>
            </GroupFoot>
          </Group>
          <RibbonEnd>
            <button aria-label="Collapse ribbon">
              <Chevron up wide />
            </button>
          </RibbonEnd>
        </Ribbon>

        <FormulaBar>
          <NameBox>
            <NameInput aria-label="Name box" defaultValue="A1" />
            <Chevron wide />
          </NameBox>
          <BarDots>
            <Icon w={4} h={12}>
              <path d="M2 1v2M2 5v2M2 9v2" strokeWidth="2" />
            </Icon>
          </BarDots>
          <BarTools>
            <button aria-label="Cancel entry">
              <Icon w={12} h={12}>
                <path d="M1 1l10 10M11 1L1 11" />
              </Icon>
            </button>
          </BarTools>
          <Formula>
            <FormulaText aria-label="Formula" />
            <Collapse aria-label="Collapse formula bar">
              <Chevron up wide />
            </Collapse>
          </Formula>
        </FormulaBar>

        <GridArea>
          <Sheet>
            <Table>
              <colgroup>
                <col style={{ width: 28 }} />
                {columns.map((c) => (
                  <col key={c.name} style={{ width: c.w }} />
                ))}
                <col />
              </colgroup>
              <thead>
                <Row $h={20}>
                  <Corner>
                    <svg width="14" height="14" viewBox="0 0 14 14">
                      <path d="M14 0v14H0z" fill="#d3d3d3" />
                    </svg>
                  </Corner>
                  {columns.map((c, i) => (
                    <ColHead key={c.name} scope="col" $sel={i < selectedCount}>
                      {c.name}
                    </ColHead>
                  ))}
                </Row>
              </thead>
              <tbody>
                {rowHeights.map((h, i) => (
                  <SheetRow key={i} n={i + 1} h={h} />
                ))}
              </tbody>
            </Table>
          </Sheet>
          <VScroll>
            <VScrollTop>
              <svg width="8" height="6" viewBox="0 0 8 6">
                <path d="M4 0l4 6H0z" fill="#6c6c6c" />
              </svg>
              <VThumb />
            </VScrollTop>
            <svg width="8" height="6" viewBox="0 0 8 6">
              <path d="M4 6l4-6H0z" fill="#6c6c6c" />
            </svg>
          </VScroll>
        </GridArea>

        <SheetBar>
          <SheetNav aria-label="Previous sheet">
            <Icon w={6} h={10}>
              <path d="M5 1L1 5l4 4" strokeWidth="1.300" />
            </Icon>
          </SheetNav>
          <SheetNav aria-label="Next sheet">
            <Icon w={6} h={10}>
              <path d="M1 1l4 4-4 4" strokeWidth="1.300" />
            </Icon>
          </SheetNav>
          <SheetTab>
            <SheetName>Sheet1</SheetName>
          </SheetTab>
          <AddSheet aria-label="New sheet">
            <Icon w={11} h={11}>
              <path d="M5.500 0v11M0 5.500h11" />
            </Icon>
          </AddSheet>
          <HScroll>
            <HDots>
              <Icon w={4} h={10}>
                <path d="M2 .5v2M2 4v2M2 7.500v2" strokeWidth="2" />
              </Icon>
            </HDots>
            <svg width="6" height="8" viewBox="0 0 6 8">
              <path d="M0 4l6-4v8z" fill="#555" />
            </svg>
            <HThumb />
          </HScroll>
        </SheetBar>
        <StatusBar>
          <StatusItem $gap={14}>Ready</StatusItem>
          <StatusItem $gap={14}>
            <Icon w={13} h={11}>
              <path d="M6 10.500H.5V.5h12V5M.5 2.500h12M2.500 5h3M2.500 7.500h2" />
              <circle cx="9" cy="7" r="3" />
              <circle cx="9" cy="7" r="1" fill="currentColor" />
            </Icon>
          </StatusItem>
          <StatusItem $gap={0}>
            <Icon w={13} h={12}>
              <circle cx="5" cy="1.800" r="1.200" />
              <path d="M1 3.500l2.500 1v3L2 11M9 3.500l-2.500 1v2M5 7.500L3 11M7 9l2 2 3.500-4" />
            </Icon>
            Accessibility: Good to go
          </StatusItem>
        </StatusBar>

        <Taskbar>
          <Weather>
            <SunIcon />
            <Temp>
              <span>63°F</span>
              <span>Sunny</span>
            </Temp>
          </Weather>
          <Dock>
            <DockItem aria-label="Start"><StartIcon /></DockItem>
            <DockItem aria-label="Search"><SearchIcon /></DockItem>
            <DockItem aria-label="App"><BlankIcon /></DockItem>
            <DockItem aria-label="App"><BlankIcon /></DockItem>
            <DockItem aria-label="Files"><FolderIcon /></DockItem>
            <DockItem aria-label="Edge"><EdgeIcon /></DockItem>
            <DockItem aria-label="Chrome"><ChromeIcon /></DockItem>
            <DockItem aria-label="App"><BlankIcon /></DockItem>
            <DockItem aria-label="Excel" $open><ExcelTask /></DockItem>
            <DockItem aria-label="OBS"><ObsIcon /></DockItem>
          </Dock>
          <Clock>1/22/2025</Clock>
        </Taskbar>

        <FormatCells />
        <Pointer width="10" height="15" viewBox="0 0 10 15">
          <path d="M1 1v11l2.500-2.300L5.500 14l1.800-.9-2-4H9z" fill="#fff" stroke="#777" />
        </Pointer>

        <Banner href="#subscribe">
          <svg width="24" height="72" viewBox="0 0 24 72" stroke="#fff" strokeWidth="4" strokeLinecap="round" fill="none">
            <path d="M6 12c5 3 10 3.500 15 4M3 39c5-1 10-1 14-1M12 66l6-9" />
          </svg>
          <BannerText>
            <BannerBig>SUBSCRIBE</BannerBig>
            <BannerSmall>TO OUR YOUTUBE CHANNEL!</BannerSmall>
          </BannerText>
          <BannerPlay width="94" height="72" viewBox="0 0 94 72">
            <path d="M12 14.500Q32 13 52 14.500Q62 15 62.500 25Q63.500 36 62.500 47Q62 57 52 57.500Q32 59 12 57.500Q2 57 1.500 47Q.5 36 1.500 25Q2 15 12 14.500z" fill="#fff" />
            <path d="M26 27l16 8.500-16 9z" fill="#d90f1c" />
            <path d="M67 13l4-7M74 32l16-2M73 51l8 9" stroke="#fff" strokeWidth="4" strokeLinecap="round" fill="none" />
          </BannerPlay>
        </Banner>
      </Window>
    </>
  );
}
